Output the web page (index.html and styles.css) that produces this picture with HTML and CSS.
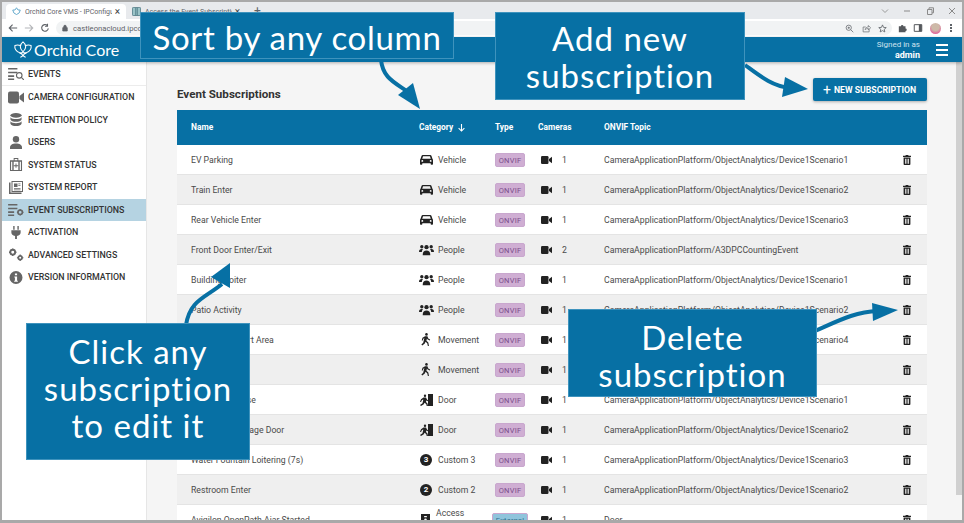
FILE: index.html
```html
<!DOCTYPE html>
<html lang="en">
<head>
<meta charset="utf-8">
<title>Event Subscriptions</title>
<link rel="stylesheet" href="styles.css">
</head>
<body>
<svg class="defs" width="0" height="0" aria-hidden="true">
  <defs>
    <symbol id="i-car" viewBox="0 0 14 12"><path d="M3 0.5h8c.7 0 1.1.4 1.3 1L13.5 5c.4.3.5.6.5 1v4.2c0 .5-.3.8-.8.8h-.9c-.5 0-.8-.3-.8-.8V9.500H2.500v.7c0 .5-.3.8-.8.8H.8c-.5 0-.8-.3-.8-.8V6c0-.4.1-.7.5-1l1.200-3.500c.2-.6.6-1 1.300-1zM3.300 2 2.400 4.700h9.200L10.700 2zM2.500 6a1 1 0 1 0 0 2 1 1 0 0 0 0-2zm9 0a1 1 0 1 0 0 2 1 1 0 0 0 0-2z" fill-rule="evenodd"/></symbol>
    <symbol id="i-people" viewBox="0 0 16 12"><circle cx="3" cy="2.500" r="1.800"/><circle cx="13" cy="2.500" r="1.800"/><circle cx="8" cy="3" r="2.300"/><path d="M0 8c0-2 1-3 2.800-3 .6 0 1 .1 1.400.4C3.400 6.100 3 7 3 8H0zM16 8c0-2-1-3-2.800-3-.6 0-1 .1-1.400.4.800.7 1.200 1.600 1.200 2.600H16zM4 10.500c0-2.500 1.500-4 4-4s4 1.500 4 4v1H4z"/></symbol>
    <symbol id="i-walk" viewBox="0 0 10 14"><circle cx="5.500" cy="1.500" r="1.400"/><path d="M4 3.500h2.500l1 2.500 2 1-.5 1-2.500-1.200-.5-1-.5 2.500 2 2 .7 3.700H7l-.7-3-1.800-1.700-.8 2L1 13.500 0 12.500l2-2 1.200-5-1 .6-.7 2H.4l.8-3z"/></symbol>
    <symbol id="i-door" viewBox="0 0 14 12"><path d="M9 0h5v12H9zM6 .6a1.200 1.200 0 1 1 0 2.400 1.200 1.200 0 0 1 0-2.400zM4.500 3.500H7l1 2 1 .7v1.100L7.300 6.500 7 8l1.500 1.500.5 2.500H7.700l-.5-2L5.500 8.700l-.7 1.500L2 12 1 11l2.500-1.800.8-3.700-1.300.6L2 7.900H1L2 5.300z"/></symbol>
    <symbol id="i-cam" viewBox="0 0 11 8"><rect x="0" y="0" width="7.500" height="8" rx="1.200"/><path d="M8 3l3-2.200v6.400L8 5z"/></symbol>
    <symbol id="i-trash" viewBox="0 0 8 10"><path d="M2.800 0h2.400l.4.700H8V2H0V.7h2.400zM.6 2.600h6.800v6.400c0 .6-.4 1-1 1H1.600c-.6 0-1-.4-1-1zM2 3.800v5h.8v-5zm1.600 0v5h.8v-5zm1.600 0v5H6v-5z" fill-rule="evenodd"/></symbol>
    <symbol id="i-lines" viewBox="0 0 17 14"><path d="M0 1h10v1.700H0zM0 5h10v1.700H0zM0 9h6.500v1.700H0zM0 12.300h6.500V14H0z"/></symbol>
  </defs>
</svg>
<div class="frame">
  <header class="chrome">
    <div class="tabstrip">
      <div class="tab active">
        <svg class="favicon" viewBox="0 0 12 12"><path d="M6 1 8 4 11 4 9.500 8 6 10 2.500 8 1 4 4 4z" fill="none" stroke="#5aa4c8" stroke-width="1.200"/></svg>
        <span class="tab-title">Orchid Core VMS - IPConfigure, I</span><span class="tab-x">×</span>
      </div>
      <div class="tab">
        <svg class="favicon" viewBox="0 0 12 12"><rect x=".5" y=".5" width="11" height="11" rx="1.500" fill="#9bc4c8" stroke="#3f6b78"/><path d="M5 1v10M7 1v10" stroke="#3f6b78"/></svg>
        <span class="tab-title">Access the Event Subscriptions | I</span><span class="tab-x">×</span>
      </div>
      <span class="tab-new">+</span>
      <div class="winbtns">
        <svg viewBox="0 0 10 10" class="winbtn"><path d="M2 3.500 5 6.500 8 3.500" fill="none" stroke="#9a9a9a"/></svg>
        <svg viewBox="0 0 10 10" class="winbtn"><path d="M2 5h6" stroke="#8a8a8a"/></svg>
        <svg viewBox="0 0 10 10" class="winbtn"><path d="M2.500 3.500h4.500v5h-4.500zM4 3.500V1.800h4.500v5H7" fill="none" stroke="#8a8a8a"/></svg>
        <svg viewBox="0 0 10 10" class="winbtn"><path d="M2 2l6 6M8 2l-6 6" stroke="#8a8a8a"/></svg>
      </div>
    </div>
    <div class="toolbar">
      <svg viewBox="0 0 12 12" class="nav-icon"><path d="M11 6H2M5.500 2 1.500 6l4 4" fill="none" stroke="#5f6368" stroke-width="1.300"/></svg>
      <svg viewBox="0 0 12 12" class="nav-icon"><path d="M1 6h9M6.500 2l4 4-4 4" fill="none" stroke="#b4b6b9" stroke-width="1.300"/></svg>
      <svg viewBox="0 0 12 12" class="nav-icon"><path d="M10 6.500A4 4 0 1 1 8.800 3M9 .8v3H6" fill="none" stroke="#5f6368" stroke-width="1.300"/></svg>
      <div class="omnibox">
        <svg viewBox="0 0 8 10" class="lock"><path d="M1 4.500h6V9H1zM2.300 4.500V3a1.700 1.700 0 0 1 3.400 0v1.500" fill="#5f6368" stroke="#5f6368"/></svg>
        <span class="url">castleonacloud.ipconfigure.com</span>
        <div class="omni-icons">
          <svg viewBox="0 0 12 12"><circle cx="5" cy="5" r="3.500" fill="none" stroke="#5f6368"/><path d="M7.500 7.500 11 11M3.500 5h3M5 3.500v3" stroke="#5f6368"/></svg>
          <svg viewBox="0 0 12 12"><path d="M5 4H1.500v6.500h8V7M4 7.500C4.500 5 6.500 4 8.500 4V2l3 3-3 3V6C6.500 6 5 6.500 4 7.500z" fill="none" stroke="#6f7377"/></svg>
          <svg viewBox="0 0 12 12"><path d="M6 1.200 7.400 4.500l3.600.3-2.700 2.300.8 3.500L6 8.800 2.900 10.600l.8-3.500L1 4.800l3.600-.3z" fill="none" stroke="#5f6368" stroke-width="1.100"/></svg>
        </div>
      </div>
      <svg viewBox="0 0 12 12" class="tool-icon"><path d="M1 4h2.500a1.500 1.500 0 0 1 3 0H9v2.500a1.500 1.500 0 0 1 0 3V11H1z" fill="#55585c"/></svg>
      <svg viewBox="0 0 12 12" class="tool-icon"><path d="M1.500 2h9v8h-9z" fill="none" stroke="#55585c" stroke-width="1.200"/><path d="M7 2h3.500v8H7z" fill="#55585c"/></svg>
      <span class="avatar"></span>
      <span class="kebab"><i></i><i></i><i></i></span>
    </div>
  </header>

  <div class="appbar">
    <div class="brand">
      <svg viewBox="0 0 22 20" class="brand-logo"><path d="M11 1c2 1.500 3 3.500 3 5.500 0 2-1.300 4-3 5.500-1.700-1.500-3-3.500-3-5.500C8 4.500 9 2.500 11 1zM14 5c2-.8 4-.8 6 0 .5 3-1 7-5.500 8H7.500C3 12 1.500 8 2 5c2-.8 4-.8 6 0M7 13.500c1.500 0 3 .7 4 2.500 1-1.800 2.500-2.500 4-2.500M8 18c1.200-.2 2.300-.9 3-2 .7 1.100 1.800 1.800 3 2" fill="none" stroke="#fff" stroke-width="1.200" stroke-linejoin="round"/></svg>
      <span class="brand-name">Orchid Core</span>
    </div>
    <div class="account">
      <div class="signed">
        <span class="signed-label">Signed in as</span>
        <span class="signed-name">admin</span>
      </div>
      <span class="burger"><i></i><i></i><i></i></span>
    </div>
  </div>

  <div class="body-row">
    <nav class="sidebar">
      <a class="nav-item first"><span class="nav-ico"><svg viewBox="0 0 17 14"><use href="#i-lines"/><circle cx="12" cy="9" r="3" fill="none" stroke="currentColor" stroke-width="1.200"/><path d="M14 11l3 3" stroke="currentColor" stroke-width="1.200"/></svg></span>EVENTS</a>
      <a class="nav-item"><span class="nav-ico"><svg viewBox="0 0 16 12"><rect width="11" height="12" rx="2"/><path d="M11.500 4.500 16 1v10l-4.500-3.500z"/></svg></span>CAMERA CONFIGURATION</a>
      <a class="nav-item"><span class="nav-ico"><svg viewBox="0 0 12 14"><ellipse cx="6" cy="2.500" rx="6" ry="2.500"/><path d="M0 4.500c1 1.500 3.500 2 6 2s5-.5 6-2V7c-.6 1.500-3 2.500-6 2.500S.6 8.500 0 7zM0 9c1 1.500 3.500 2 6 2s5-.5 6-2v2.500C11.400 13 9 14 6 14s-5.400-1-6-2.500z"/></svg></span>RETENTION POLICY</a>
      <a class="nav-item"><span class="nav-ico"><svg viewBox="0 0 12 13"><circle cx="6" cy="3.200" r="3.200"/><path d="M0 13v-1.500C0 9 2.500 7.500 6 7.500s6 1.500 6 4V13z"/></svg></span>USERS</a>
      <a class="nav-item"><span class="nav-ico"><svg viewBox="0 0 13 14"><path d="M4 0h5v2.500h4V14H0V2.500h4zM5 1v1.500h3V1zM1.200 4v8.800H2.500V4zM10.500 4v8.800h1.300V4zM4 4v8.800h5V4zM6 6h1v1.800h1.800v1H7v1.800H6V8.800H4.200v-1H6z" fill-rule="evenodd"/></svg></span>SYSTEM STATUS</a>
      <a class="nav-item"><span class="nav-ico"><svg viewBox="0 0 14 13"><path d="M0 1.500h1.500v10H12.500V13H0z"/><path d="M2.500 0H14v11H2.500zM3.500 1v9H13V1zM5 2.500h3.500V6H5zM5 7h6.500v.8H5zM5 8.500h6.500v.8H5zM9.300 2.500h2.200v.8H9.300zM9.300 4h2.200v.8H9.300z" fill-rule="evenodd"/></svg></span>SYSTEM REPORT</a>
      <a class="nav-item selected"><span class="nav-ico"><svg viewBox="0 0 17 14"><use href="#i-lines"/><circle cx="13" cy="10" r="2.400" fill="none" stroke="currentColor" stroke-width="1.800"/><path d="M13 6.500v1.200M13 12.300v1.200M9.500 10h1.200M15.300 10h1.200" stroke="currentColor" stroke-width="1.400"/></svg></span>EVENT SUBSCRIPTIONS</a>
      <a class="nav-item"><span class="nav-ico"><svg viewBox="0 0 12 14"><path d="M3 0h1.500v4H3zM7.500 0H9v4H7.500zM1 4.500h10V7c0 2-1.500 3.500-4 3.800V14H5v-3.200C2.500 10.500 1 9 1 7z"/></svg></span>ACTIVATION</a>
      <a class="nav-item"><span class="nav-ico"><svg viewBox="0 0 17 14"><circle cx="5" cy="4.500" r="2.600" fill="none" stroke="currentColor" stroke-width="2"/><path d="M5 .5v2M5 6.500v2M1 4.500h2M7 4.500h2" stroke="currentColor" stroke-width="1.500"/><circle cx="13" cy="10.500" r="2" fill="none" stroke="currentColor" stroke-width="1.800"/><path d="M13 7v1.500M13 12.500V14M9.500 10.500H11M15 10.500h1.500" stroke="currentColor" stroke-width="1.300"/></svg></span>ADVANCED SETTINGS</a>
      <a class="nav-item"><span class="nav-ico"><svg viewBox="0 0 12 12"><path d="M6 0a6 6 0 1 1 0 12A6 6 0 0 1 6 0zM5 2.200v1.800h2V2.200zM4.500 5v1H5v3H4.300v1h3.400V9H7V5z" fill-rule="evenodd"/></svg></span>VERSION INFORMATION</a>
    </nav>

    <main class="content">
      <div class="content-head">
        <h1 class="page-title">Event Subscriptions</h1>
        <button class="new-btn"><span class="plus">+</span>NEW SUBSCRIPTION</button>
      </div>
      <div class="table">
        <div class="row head">
          <span class="c-name">Name</span>
          <span class="c-cat">Category<svg viewBox="0 0 10 10" class="sort"><path d="M5 1v8M1.800 5.800 5 9l3.200-3.200" fill="none" stroke="#fff" stroke-width="1.200"/></svg></span>
          <span class="c-type">Type</span>
          <span class="c-cam">Cameras</span>
          <span class="c-topic">ONVIF Topic</span>
          <span class="c-del"></span>
        </div>

        <div class="row"><span class="c-name">EV Parking</span><span class="c-cat"><span class="cat-ico"><svg class="ic-car"><use href="#i-car"/></svg></span>Vehicle</span><span class="c-type"><span class="chip">ONVIF</span></span><span class="c-cam"><svg class="ic-cam"><use href="#i-cam"/></svg>1</span><span class="c-topic">CameraApplicationPlatform/ObjectAnalytics/Device1Scenario1</span><span class="c-del"><svg class="ic-trash"><use href="#i-trash"/></svg></span></div>
        <div class="row"><span class="c-name">Train Enter</span><span class="c-cat"><span class="cat-ico"><svg class="ic-car"><use href="#i-car"/></svg></span>Vehicle</span><span class="c-type"><span class="chip">ONVIF</span></span><span class="c-cam"><svg class="ic-cam"><use href="#i-cam"/></svg>1</span><span class="c-topic">CameraApplicationPlatform/ObjectAnalytics/Device1Scenario2</span><span class="c-del"><svg class="ic-trash"><use href="#i-trash"/></svg></span></div>
        <div class="row"><span class="c-name">Rear Vehicle Enter</span><span class="c-cat"><span class="cat-ico"><svg class="ic-car"><use href="#i-car"/></svg></span>Vehicle</span><span class="c-type"><span class="chip">ONVIF</span></span><span class="c-cam"><svg class="ic-cam"><use href="#i-cam"/></svg>1</span><span class="c-topic">CameraApplicationPlatform/ObjectAnalytics/Device1Scenario3</span><span class="c-del"><svg class="ic-trash"><use href="#i-trash"/></svg></span></div>
        <div class="row"><span class="c-name">Front Door Enter/Exit</span><span class="c-cat"><span class="cat-ico"><svg class="ic-people"><use href="#i-people"/></svg></span>People</span><span class="c-type"><span class="chip">ONVIF</span></span><span class="c-cam"><svg class="ic-cam"><use href="#i-cam"/></svg>2</span><span class="c-topic">CameraApplicationPlatform/A3DPCCountingEvent</span><span class="c-del"><svg class="ic-trash"><use href="#i-trash"/></svg></span></div>
        <div class="row"><span class="c-name">Building Loiter</span><span class="c-cat"><span class="cat-ico"><svg class="ic-people"><use href="#i-people"/></svg></span>People</span><span class="c-type"><span class="chip">ONVIF</span></span><span class="c-cam"><svg class="ic-cam"><use href="#i-cam"/></svg>1</span><span class="c-topic">CameraApplicationPlatform/ObjectAnalytics/Device1Scenario1</span><span class="c-del"><svg class="ic-trash"><use href="#i-trash"/></svg></span></div>
        <div class="row"><span class="c-name">Patio Activity</span><span class="c-cat"><span class="cat-ico"><svg class="ic-people"><use href="#i-people"/></svg></span>People</span><span class="c-type"><span class="chip">ONVIF</span></span><span class="c-cam"><svg class="ic-cam"><use href="#i-cam"/></svg>1</span><span class="c-topic">CameraApplicationPlatform/ObjectAnalytics/Device1Scenario2</span><span class="c-del"><svg class="ic-trash"><use href="#i-trash"/></svg></span></div>
        <div class="row"><span class="c-name">Walkway Airport Area</span><span class="c-cat"><span class="cat-ico"><svg class="ic-walk"><use href="#i-walk"/></svg></span>Movement</span><span class="c-type"><span class="chip">ONVIF</span></span><span class="c-cam"><svg class="ic-cam"><use href="#i-cam"/></svg>1</span><span class="c-topic">CameraApplicationPlatform/ObjectAnalytics/Device1Scenario4</span><span class="c-del"><svg class="ic-trash"><use href="#i-trash"/></svg></span></div>
        <div class="row"><span class="c-name">Movement</span><span class="c-cat"><span class="cat-ico"><svg class="ic-walk"><use href="#i-walk"/></svg></span>Movement</span><span class="c-type"><span class="chip">ONVIF</span></span><span class="c-cam"><svg class="ic-cam"><use href="#i-cam"/></svg>1</span><span class="c-topic">CameraApplicationPlatform/ObjectAnalytics</span><span class="c-del"><svg class="ic-trash"><use href="#i-trash"/></svg></span></div>
        <div class="row"><span class="c-name">Front Door Close</span><span class="c-cat"><span class="cat-ico"><svg class="ic-door"><use href="#i-door"/></svg></span>Door</span><span class="c-type"><span class="chip">ONVIF</span></span><span class="c-cam"><svg class="ic-cam"><use href="#i-cam"/></svg>1</span><span class="c-topic">CameraApplicationPlatform/ObjectAnalytics/Device1Scenario1</span><span class="c-del"><svg class="ic-trash"><use href="#i-trash"/></svg></span></div>
        <div class="row"><span class="c-name">Loiter Near Garage Door</span><span class="c-cat"><span class="cat-ico"><svg class="ic-door"><use href="#i-door"/></svg></span>Door</span><span class="c-type"><span class="chip">ONVIF</span></span><span class="c-cam"><svg class="ic-cam"><use href="#i-cam"/></svg>1</span><span class="c-topic">CameraApplicationPlatform/ObjectAnalytics/Device1Scenario2</span><span class="c-del"><svg class="ic-trash"><use href="#i-trash"/></svg></span></div>
        <div class="row"><span class="c-name">Water Fountain Loitering (7s)</span><span class="c-cat"><span class="cat-ico"><span class="num">3</span></span>Custom 3</span><span class="c-type"><span class="chip">ONVIF</span></span><span class="c-cam"><svg class="ic-cam"><use href="#i-cam"/></svg>1</span><span class="c-topic">CameraApplicationPlatform/ObjectAnalytics/Device1Scenario3</span><span class="c-del"><svg class="ic-trash"><use href="#i-trash"/></svg></span></div>
        <div class="row"><span class="c-name">Restroom Enter</span><span class="c-cat"><span class="cat-ico"><span class="num">2</span></span>Custom 2</span><span class="c-type"><span class="chip">ONVIF</span></span><span class="c-cam"><svg class="ic-cam"><use href="#i-cam"/></svg>1</span><span class="c-topic">CameraApplicationPlatform/ObjectAnalytics/Device1Scenario2</span><span class="c-del"><svg class="ic-trash"><use href="#i-trash"/></svg></span></div>
        <div class="row"><span class="c-name">Avigilon OpenPath Ajar Started</span><span class="c-cat"><span class="cat-ico"><svg class="ic-badge" viewBox="0 0 10 12"><path d="M0 0h10v12H0zM3.500 2v1.500h3V2zM5 5a1.500 1.500 0 1 0 0 3 1.500 1.500 0 0 0 0-3zM2.500 9v1h5V9z" fill-rule="evenodd"/></svg></span><span class="cat-two">Access Control</span></span><span class="c-type"><span class="chip ext">External</span></span><span class="c-cam"><svg class="ic-cam"><use href="#i-cam"/></svg>1</span><span class="c-topic">Door</span><span class="c-del"><svg class="ic-trash"><use href="#i-trash"/></svg></span></div>
      </div>
    </main>
    <div class="scrollbar"><span class="thumb"></span></div>
  </div>

  <svg class="arrows" viewBox="0 0 964 523" aria-hidden="true">
    <path d="M381 60C383 78 394 82 408 92" fill="none" stroke="#0770a4" stroke-width="4"/>
    <path d="M420 109 398 95 413 83z" fill="#0770a4"/>
    <path d="M745 65C760 76 772 86 790 88" fill="none" stroke="#0770a4" stroke-width="4"/>
    <path d="M808 89 782 97 785 77z" fill="#0770a4"/>
    <path d="M186 325C190 300 205 298 222 284" fill="none" stroke="#0770a4" stroke-width="4"/>
    <path d="M230 263 230 288 211 277z" fill="#0770a4"/>
    <path d="M815 331C840 320 855 312 878 311" fill="none" stroke="#0770a4" stroke-width="4"/>
    <path d="M898 310 873 321 872 303z" fill="#0770a4"/>
  </svg>
  <div class="callout c-sort">Sort by any column</div>
  <div class="callout c-add">Add new<br>subscription</div>
  <div class="callout c-click">Click any<br>subscription<br>to edit it</div>
  <div class="callout c-delete">Delete<br>subscription</div>
</div>
</body>
</html>
```

FILE: styles.css
```css
* { box-sizing: border-box; }
html, body { margin: 0; height: 100%; overflow: hidden; }
body { font-family: Roboto, "Liberation Sans", sans-serif; color: #3c3c3c; background: #fff; }
.defs { position: absolute; }
.frame {
  position: relative;
  width: 964px;
  height: 523px;
  border: solid #a9a9a9;
  border-width: 2px 2px 3px 2px;
  overflow: hidden;
  display: flex;
  flex-direction: column;
  background: #fff;
}
svg { display: block; fill: currentColor; }

/* browser chrome */
.chrome { flex: none; height: 35px; }
.tabstrip { height: 17px; background: #e8eaed; display: flex; align-items: flex-end; padding-left: 4px; position: relative; }
.tab { width: 120px; height: 15px; display: flex; align-items: center; padding: 0 6px; font-size: 7px; color: #5f6368; flex: none; }
.tab.active { background: #fff; border-radius: 4px 4px 0 0; }
.favicon { width: 9px; height: 9px; margin-right: 4px; flex: none; }
.tab-title { flex: 1; min-width: 0; white-space: nowrap; overflow: hidden; }
.tab-x { font-size: 10px; margin-left: 3px; color: #3c4043; }
.tab-new { margin-left: 8px; font-size: 12px; line-height: 15px; color: #5f6368; }
.winbtns { margin-left: auto; display: flex; gap: 12.500px; padding-right: 5px; align-self: center; }
.winbtn { width: 10px; height: 10px; }
.toolbar { height: 18px; background: #fff; display: flex; align-items: center; padding-left: 6px; }
.nav-icon { width: 10px; height: 10px; margin-right: 6px; flex: none; }
.omnibox { width: 836px; height: 14px; background: #f1f3f4; border-radius: 7px; display: flex; align-items: center; padding: 0 5px 0 6px; font-size: 7.700px; color: #5f6368; flex: none; }
.lock { width: 6px; height: 8px; margin-right: 5px; }
.url { white-space: nowrap; }
.omni-icons { margin-left: auto; display: flex; gap: 7.500px; }
.omni-icons svg { width: 9px; height: 9px; }
.tool-icon { width: 10px; height: 10px; margin-left: 6px; flex: none; }
.tool-icon + .tool-icon { margin-left: 5px; }
.avatar { width: 11px; height: 11px; margin-left: 7px; border-radius: 50%; background: radial-gradient(circle at 50% 35%, #cdb9a8 0 40%, #e2689a 75%); flex: none; }
.kebab { margin-left: 9px; display: flex; flex-direction: column; gap: 1px; }
.kebab i { width: 2px; height: 2px; background: #5f6368; }

/* app bar */
.appbar { flex: none; height: 25px; background: #0770a4; color: #fff; display: flex; align-items: center; justify-content: space-between; padding: 0 14px 0 11px; position: relative; z-index: 2; box-shadow: 0 1px 3px rgba(0,0,0,.3); }
.brand { display: flex; align-items: center; gap: 1px; }
.brand-logo { width: 20px; height: 18px; }
.brand-name { font-family: Lato, sans-serif; font-size: 16px; }
.account { display: flex; align-items: center; gap: 16px; }
.signed { display: flex; flex-direction: column; align-items: flex-end; line-height: 10px; font-size: 8px; }
.signed-label { color: #cfe3ee; }
.signed-name { font-weight: 700; font-size: 9px; }
.burger { display: flex; flex-direction: column; gap: 3px; }
.burger i { width: 12px; height: 2px; background: #fff; display: block; }

.body-row { flex: 1; min-height: 0; display: flex; background: #f5f5f5; }
.sidebar { width: 145px; flex: none; background: #fff; border-right: 1px solid #e6e6e6; }
.nav-item { display: flex; align-items: center; height: 22.500px; font-size: 8.850px; font-weight: 500; color: #333; white-space: nowrap; }
.nav-item.first { height: 24px; border-bottom: 1px solid #ececec; }
.nav-item.selected { background: #b5d3e2; }
.nav-ico { width: 26px; flex: none; display: flex; justify-content: center; color: #666; padding-left: 1px; }
.nav-ico svg { width: 16px; height: 13px; }
.content { flex: 1; min-width: 0; padding: 0 0 0 30px; min-height: 0; overflow: hidden; }
.content-head { height: 48px; display: flex; align-items: flex-end; justify-content: space-between; width: 750px; }
.page-title { font-size: 11.600px; font-weight: 700; color: #333; margin: 0 0 9px; }
.new-btn { height: 23px; width: 114px; margin-bottom: 9px; padding: 0 0 0 10px; border: 0; border-radius: 2px; background: #0770a4; color: #fff; font: 700 8.700px Roboto, sans-serif; display: flex; align-items: center; gap: 3px; box-shadow: 0 1px 3px rgba(0,0,0,.3); white-space: nowrap; }
.plus { font-size: 14px; font-weight: 400; line-height: 1; }
.table { width: 750px; background: #fff; }
.row { display: flex; align-items: center; height: 30px; font-size: 8.700px; color: #4a4a4a; border-bottom: 1px solid #e4e4e4; white-space: nowrap; padding-left: 14px; }
.row:nth-child(odd) { background: #efefef; }
.row.head { height: 35px; padding-bottom: 1px; background: #0770a4; color: #fff; font-weight: 700; font-size: 8.400px; border: 0; }
.c-name { width: 228px; flex: none; }
.c-cat { width: 76px; flex: none; display: flex; align-items: center; }
.c-type { width: 43px; flex: none; }
.c-cam { width: 66px; flex: none; display: flex; align-items: center; }
.c-topic { width: 299px; flex: none; }
.c-del { flex: none; }
.sort { width: 9px; height: 9px; margin-left: 4px; }
.cat-ico { width: 19px; flex: none; display: flex; justify-content: flex-start; color: #222; }
.ic-car { width: 13px; height: 12px; margin-left: 1px; }
.ic-people { width: 15px; height: 12px; }
.ic-walk { width: 10px; height: 13px; margin-left: 2px; }
.ic-door { width: 14px; height: 12px; }
.ic-badge { width: 9px; height: 11px; margin-left: 2px; }
.cat-two { white-space: normal; line-height: 13px; margin-left: -2px; width: 40px; }
.num { width: 12px; height: 12px; margin-left: 1px; border-radius: 50%; background: #222; color: #fff; font-size: 8px; font-weight: 700; line-height: 12px; text-align: center; display: block; }
.chip { display: inline-block; width: 30px; height: 14px; line-height: 13px; text-align: center; font-size: 7.500px; letter-spacing: .2px; color: #7a4d8a; background: #cfaed3; border: 1px solid #c9a7ce; border-radius: 2px; }
.chip.ext { width: 36px; margin-left: -3px; color: #2e6e8e; background: #8fc4dc; }
.ic-cam { width: 11px; height: 8px; color: #222; margin: 0 10px 0 3px; }
.ic-trash { width: 8px; height: 10px; color: #222; }
.scrollbar { width: 6px; flex: none; background: #f5f5f5; }
.thumb { display: block; height: 433px; background: #d0d0d0; }

/* annotation overlays */
.arrows { position: absolute; inset: -2px 0 0 -2px; width: 964px; height: 523px; z-index: 3; }
.callout { position: absolute; z-index: 4; background: #0770a4; color: #fff; border: 1px solid #3e93bd; font-family: Lato, sans-serif; text-align: center; letter-spacing: 1px; }
.c-sort { left: 138px; top: 10px; width: 314px; height: 47px; font-size: 33px; line-height: 49px; letter-spacing: .7px; }
.c-add { left: 493px; top: 10px; width: 250px; height: 88px; font-size: 33px; line-height: 36.500px; padding-top: 7px; }
.c-click { left: 24px; top: 321px; width: 224px; height: 137px; font-size: 33px; line-height: 37px; padding-top: 9px; }
.c-delete { left: 566px; top: 307px; width: 249px; height: 88px; font-size: 33px; line-height: 37px; padding-top: 9px; }
```
